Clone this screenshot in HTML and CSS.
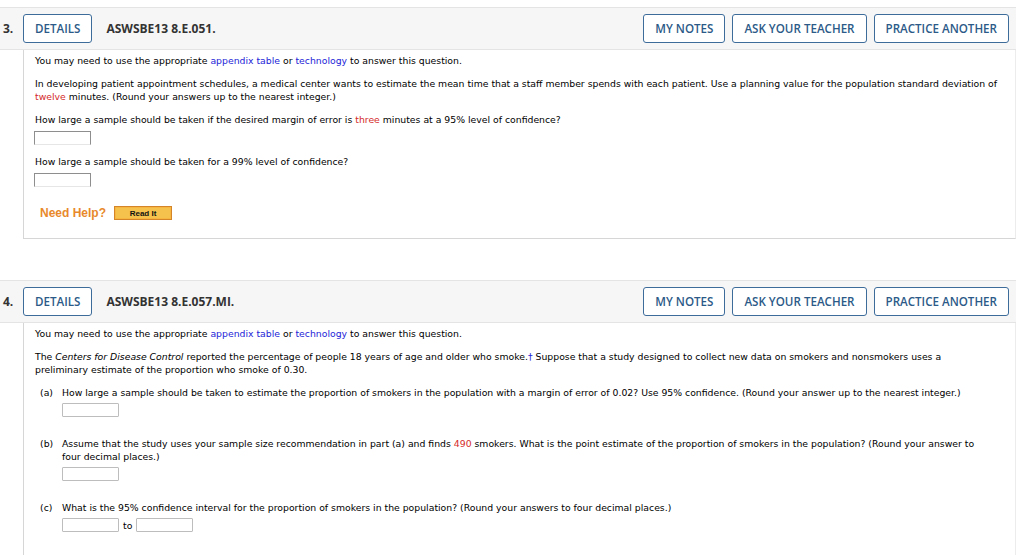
FILE: index.html
```html
<!DOCTYPE html>
<html>
<head>
<meta charset="utf-8">
<link rel="stylesheet" href="styles.css">
</head>
<body>
<div class="page">
  <section class="question q1">
    <div class="qhead">
      <span class="qnum">3.</span>
      <button class="btn">DETAILS</button>
      <span class="qtitle">ASWSBE13 8.E.051.</span>
      <div class="actions">
        <button class="btn">MY NOTES</button>
        <button class="btn">ASK YOUR TEACHER</button>
        <button class="btn">PRACTICE ANOTHER</button>
      </div>
    </div>
    <div class="qbody">
      <p>You may need to use the appropriate <span class="link">appendix table</span> or <span class="link">technology</span> to answer this question.</p>
      <p>In developing patient appointment schedules, a medical center wants to estimate the mean time that a staff member spends with each patient. Use a planning value for the population standard deviation of <span class="red">twelve</span> minutes. (Round your answers up to the nearest integer.)</p>
      <p class="ask">How large a sample should be taken if the desired margin of error is <span class="red">three</span> minutes at a 95% level of confidence?</p>
      <div class="ans"><span class="box"></span></div>
      <p class="ask">How large a sample should be taken for a 99% level of confidence?</p>
      <div class="ans"><span class="box"></span></div>
      <div class="help">
        <span class="needhelp">Need Help?</span>
        <span class="readit">Read It</span>
      </div>
    </div>
  </section>

  <section class="question q2">
    <div class="qhead">
      <span class="qnum">4.</span>
      <button class="btn">DETAILS</button>
      <span class="qtitle">ASWSBE13 8.E.057.MI.</span>
      <div class="actions">
        <button class="btn">MY NOTES</button>
        <button class="btn">ASK YOUR TEACHER</button>
        <button class="btn">PRACTICE ANOTHER</button>
      </div>
    </div>
    <div class="qbody">
      <p>You may need to use the appropriate <span class="link">appendix table</span> or <span class="link">technology</span> to answer this question.</p>
      <p class="narrow">The <i>Centers for Disease Control</i> reported the percentage of people 18 years of age and older who smoke.<span class="link">&dagger;</span> Suppose that a study designed to collect new data on smokers and nonsmokers uses a preliminary estimate of the proportion who smoke of 0.30.</p>
      <div class="part">
        <span class="plabel">(a)</span>
        <div class="ptext">
          <p>How large a sample should be taken to estimate the proportion of smokers in the population with a margin of error of 0.02? Use 95% confidence. (Round your answer up to the nearest integer.)</p>
          <div class="ans"><span class="box"></span></div>
        </div>
      </div>
      <div class="part">
        <span class="plabel">(b)</span>
        <div class="ptext">
          <p class="narrow">Assume that the study uses your sample size recommendation in part (a) and finds <span class="red">490</span> smokers. What is the point estimate of the proportion of smokers in the population? (Round your answer to four decimal places.)</p>
          <div class="ans"><span class="box"></span></div>
        </div>
      </div>
      <div class="part">
        <span class="plabel">(c)</span>
        <div class="ptext">
          <p>What is the 95% confidence interval for the proportion of smokers in the population? (Round your answers to four decimal places.)</p>
          <div class="ans"><span class="box"></span><span class="to">to</span><span class="box"></span></div>
        </div>
      </div>
    </div>
  </section>
</div>
</body>
</html>
```
FILE: styles.css
```css
html, body {
  margin: 0;
  padding: 0;
  background: #fff;
}
.page {
  width: 1016px;
  padding-top: 7px;
}
.question {
  margin-bottom: 41px;
}
.qhead {
  display: flex;
  align-items: center;
  height: 43px;
  box-sizing: border-box;
  background: #f6f6f6;
  border-top: 1px solid #e4e4e4;
  border-bottom: 1px solid #e4e4e4;
  padding: 0 7px 0 3px;
  font-family: "Open Sans", sans-serif;
}
.qnum {
  width: 20px;
  font-size: 12px;
  font-weight: 700;
  color: #333;
}
.qtitle {
  margin-left: 14px;
  font-size: 12px;
  font-weight: 700;
  color: #333;
}
.actions {
  margin-left: auto;
  display: flex;
  gap: 7px;
}
.btn {
  font-family: "Open Sans", sans-serif;
  font-size: 11.6px;
  font-weight: 600;
  color: #2c5a88;
  background: #fff;
  border: 1.5px solid #3d6c9b;
  border-radius: 3px;
  height: 29px;
  padding: 0 11px;
  margin: 0;
  cursor: pointer;
}
.qbody {
  margin-left: 23px;
  border-left: 1px solid #d6d6d6;
  border-right: 1px solid #ececec;
  border-bottom: 1px solid #d6d6d6;
  padding: 4px 10px 0 11px;
  font-family: "DejaVu Sans", Verdana, sans-serif;
  font-size: 9.3px;
  line-height: 13px;
  color: #000;
}
.q2 .qbody {
  border-bottom: none;
  min-height: 240px;
}
.qbody p {
  margin: 0 0 10px 0;
}
.qbody p.narrow {
  max-width: 930px;
}
.link {
  color: #2424d8;
}
.red {
  color: #d42a2a;
}
.qbody p.ask {
  margin-bottom: 5px;
}
.ans {
  display: flex;
  align-items: center;
  height: 14px;
  margin-bottom: 10px;
}
.box {
  display: inline-block;
  width: 55px;
  height: 12px;
  border: 1px solid #c8c8c8;
  border-top-color: #8e8e8e;
  border-left-color: #8e8e8e;
  background: #fff;
}
.q1 .ans .box {
  border-right-color: #8e8e8e;
  border-bottom-color: #e6e6e6;
  margin-left: -1px;
}
.help {
  display: flex;
  align-items: center;
  gap: 8px;
  padding: 9px 0 18px 5px;
}
.needhelp {
  font-family: "Liberation Sans", Arial, sans-serif;
  font-weight: 700;
  font-size: 12px;
  color: #e8892c;
}
.readit {
  display: inline-flex;
  align-items: center;
  justify-content: center;
  box-sizing: border-box;
  width: 58px;
  height: 14px;
  border: 1px solid #d4852a;
  box-shadow: inset 0 0 0 1px #f6b640;
  background: #f5c24e;
  font-family: "Liberation Sans", Arial, sans-serif;
  font-weight: 700;
  font-size: 8px;
  color: #111;
}
.part {
  display: flex;
  margin-left: 5px;
}
.plabel {
  width: 22px;
  flex: none;
}
.ptext {
  flex: 1;
}
.part .ptext p {
  margin-bottom: 4px;
}
.part .ans {
  margin-bottom: 20px;
}
.part .box {
  border-color: #bdbdbd;
  border-radius: 1px;
}
.to {
  margin: 0 4px;
}
```
